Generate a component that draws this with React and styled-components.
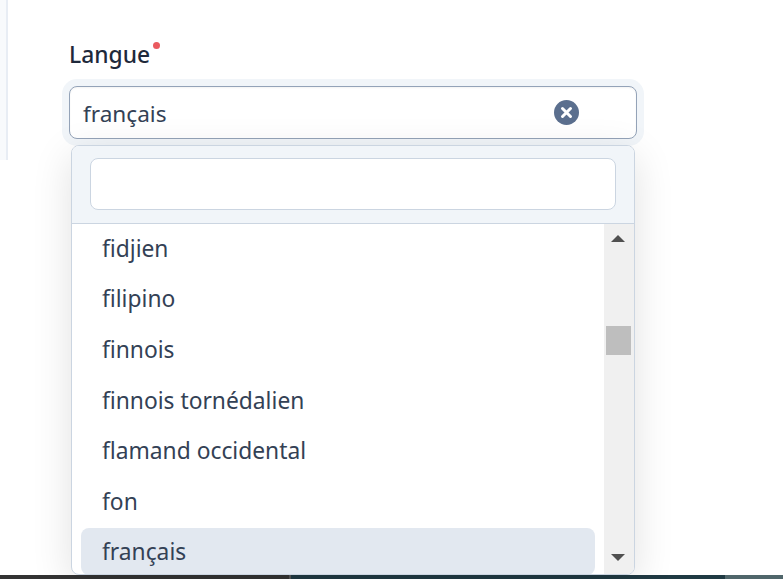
import React from 'react'
import styled, { createGlobalStyle } from 'styled-components'

const GlobalStyle = createGlobalStyle`
  html, body {
    margin: 0;
    padding: 0;
    background: #fff;
    overflow: hidden;
  }
  * {
    box-sizing: border-box;
  }
`

const Page = styled.div`
  width: 783px;
  height: 579px;
  display: flex;
  flex-direction: column;
  font-family: "Noto Sans", "Open Sans", sans-serif;
  overflow: hidden;
`

const Main = styled.main`
  flex: 1;
  min-height: 0;
  display: flex;
  align-items: flex-start;
`

const SideEdge = styled.div`
  width: 8px;
  height: 160px;
  background: #f8fafc;
  border-right: 2px solid #e8edf4;
`

const Field = styled.div`
  width: 568px;
  margin: 39px 0 0 61px;
`

const Label = styled.label`
  display: block;
  position: relative;
  width: max-content;
  font-size: 22.8px;
  line-height: 32px;
  font-weight: 500;
  color: #1e293b;
  margin-bottom: 15px;

  &::after {
    content: '';
    position: absolute;
    top: 3px;
    right: -10px;
    width: 7px;
    height: 7px;
    border-radius: 50%;
    background: #ea5a5f;
  }
`

const SelectBox = styled.div`
  position: relative;
`

const Control = styled.div`
  height: 53px;
  display: flex;
  align-items: center;
  justify-content: space-between;
  padding: 0 57px 0 13px;
  background: #fff;
  border: 1px solid #94a3b8;
  border-radius: 8px;
  box-shadow: 0 0 0 7px #f1f5f9, inset 0 1px 2px rgba(0, 0, 0, 0.05);
  font-size: 22.6px;
  color: #334155;
`

const SelectedValue = styled.span`
  padding-top: 2px;
`

const ClearButton = styled.span`
  display: flex;
  margin-bottom: 1px;
`

const Dropdown = styled.div`
  position: absolute;
  top: 59px;
  left: 2px;
  width: 564px;
  height: 430px;
  display: flex;
  flex-direction: column;
  background: #fff;
  border: 1px solid #cbd5e1;
  border-radius: 8px;
  box-shadow: 0 10px 40px rgba(0, 0, 0, 0.12);
  overflow: hidden;
`

const SearchArea = styled.div`
  flex: none;
  height: 78px;
  padding: 12px 18px 0;
  background: #f1f5f9;
  border-bottom: 1px solid #cbd5e1;
`

const SearchInput = styled.input`
  display: block;
  width: 100%;
  height: 52px;
  background: #fff;
  border: 1px solid #cbd5e1;
  border-radius: 8px;
  outline: none;
`

const ListWrap = styled.div`
  flex: 1;
  min-height: 0;
  display: flex;
`

const List = styled.ul`
  flex: 1;
  margin: 0;
  padding: 0 9px;
  list-style: none;
  overflow: hidden;
`

const Item = styled.li`
  height: ${p => (p.$selected ? '47px' : '50.6px')};
  display: flex;
  align-items: center;
  padding: ${p => (p.$selected ? '0 21px' : '0 21px 2px')};
  border-radius: 8px;
  font-size: 22.8px;
  color: #334155;
  background: ${p => (p.$selected ? '#e2e8f0' : 'transparent')};
`

const Scrollbar = styled.div`
  flex: none;
  width: 30px;
  background: #f0f0f0;
  position: relative;
`

const ArrowUp = styled.div`
  position: absolute;
  top: 11px;
  left: 7px;
  width: 0;
  height: 0;
  border-left: 7px solid transparent;
  border-right: 7px solid transparent;
  border-bottom: 7px solid #505050;
`

const ArrowDown = styled.div`
  position: absolute;
  bottom: 13px;
  left: 7px;
  width: 0;
  height: 0;
  border-left: 7px solid transparent;
  border-right: 7px solid transparent;
  border-top: 7px solid #505050;
`

const Thumb = styled.div`
  position: absolute;
  top: 102px;
  left: 2px;
  width: 25px;
  height: 29px;
  background: #bebebe;
`

const BottomBar = styled.div`
  flex: none;
  height: 4px;
  display: flex;
  background: #203a43;
`

const BarDark = styled.div`
  width: 291px;
  background: #333;
  border-right: 2px solid #555;
`

const BarSpacer = styled.div`
  flex: 1;
`

const BarLight = styled.div`
  width: 58px;
  background: #50666b;
`

const languages = ['fidjien', 'filipino', 'finnois', 'finnois tornédalien', 'flamand occidental', 'fon']

const App = () => {
  return (
    <Page>
      <GlobalStyle />
      <Main>
        <SideEdge />
        <Field>
          <Label>Langue</Label>
          <SelectBox>
            <Control>
              <SelectedValue>français</SelectedValue>
              <ClearButton>
                <svg width="25" height="25" viewBox="0 0 25 25">
                  <circle cx="12.5" cy="12.5" r="12.5" fill="#5b6f8e" />
                  <path d="M8.5 8.5l8 8M16.5 8.5l-8 8" stroke="#fff" strokeWidth="3" strokeLinecap="round" />
                </svg>
              </ClearButton>
            </Control>
            <Dropdown>
              <SearchArea>
                <SearchInput type="text" />
              </SearchArea>
              <ListWrap>
                <List>
                  {languages.map(lang => (
                    <Item key={lang}>{lang}</Item>
                  ))}
                  <Item $selected>français</Item>
                </List>
                <Scrollbar>
                  <ArrowUp />
                  <Thumb />
                  <ArrowDown />
                </Scrollbar>
              </ListWrap>
            </Dropdown>
          </SelectBox>
        </Field>
      </Main>
      <BottomBar>
        <BarDark />
        <BarSpacer />
        <BarLight />
      </BottomBar>
    </Page>
  )
}

export default App
